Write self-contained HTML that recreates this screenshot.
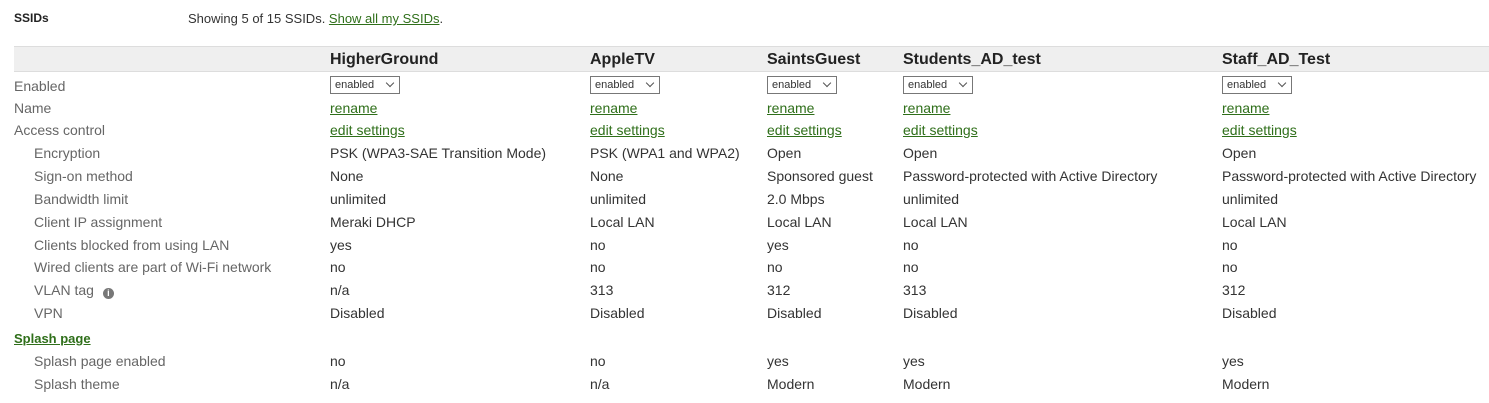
<!DOCTYPE html>
<html><head><meta charset="utf-8"><style>
body{margin:0;width:1489px;height:403px;background:#fff;font-family:"Liberation Sans",sans-serif;font-size:14px;color:#333;position:relative;overflow:hidden}
.r{position:absolute;left:0;width:1489px;height:18px;line-height:18px}
.r span{position:absolute;white-space:nowrap}
.l{left:14px;color:#666}
.i{left:34px;color:#666}
.c1{left:330px}.c2{left:590px}.c3{left:767px}.c4{left:903px}.c5{left:1222px}
a{color:#2f6f1a;text-decoration:underline}
.sel{display:inline-block;width:68px;height:16px;border:1px solid #777;font-size:11px;line-height:16px;box-sizing:content-box;position:relative;top:0}
.sel b{font-weight:normal;position:absolute;left:4px;color:#333}
.sel i{position:absolute;right:6px;top:3px;width:5px;height:5px;border-right:1px solid #555;border-bottom:1px solid #555;transform:rotate(45deg)}
.hd{position:absolute;left:14px;top:46px;width:1475px;height:26px;background:#efefef;border-top:1px solid #ddd;border-bottom:1px solid #ddd;box-sizing:border-box}
.hd span{position:absolute;top:4px;font-weight:bold;font-size:16px;color:#222}
</style></head><body>
<div style="position:absolute;left:14px;top:11px;font-weight:bold;font-size:12px;color:#222">SSIDs</div>
<div style="position:absolute;left:188px;top:11px;font-size:13px;color:#333">Showing 5 of 15 SSIDs. <a>Show all my SSIDs</a>.</div>
<div class="hd"><span style="left:316px">HigherGround</span><span style="left:576px">AppleTV</span><span style="left:753px">SaintsGuest</span><span style="left:889px">Students_AD_test</span><span style="left:1208px">Staff_AD_Test</span></div>
<div class="r" style="top:77px"><span class="l" style="top:0">Enabled</span>
<span class="c1" style="top:-1px"><span class="sel"><b>enabled</b><i></i></span></span>
<span class="c2" style="top:-1px"><span class="sel"><b>enabled</b><i></i></span></span>
<span class="c3" style="top:-1px"><span class="sel"><b>enabled</b><i></i></span></span>
<span class="c4" style="top:-1px"><span class="sel"><b>enabled</b><i></i></span></span>
<span class="c5" style="top:-1px"><span class="sel"><b>enabled</b><i></i></span></span></div>
<div class="r" style="top:99px"><span class="l">Name</span><span class="c1"><a>rename</a></span><span class="c2"><a>rename</a></span><span class="c3"><a>rename</a></span><span class="c4"><a>rename</a></span><span class="c5"><a>rename</a></span></div>
<div class="r" style="top:121px"><span class="l">Access control</span><span class="c1"><a>edit settings</a></span><span class="c2"><a>edit settings</a></span><span class="c3"><a>edit settings</a></span><span class="c4"><a>edit settings</a></span><span class="c5"><a>edit settings</a></span></div>
<div class="r" style="top:144px"><span class="i">Encryption</span><span class="c1">PSK (WPA3-SAE Transition Mode)</span><span class="c2">PSK (WPA1 and WPA2)</span><span class="c3">Open</span><span class="c4">Open</span><span class="c5">Open</span></div>
<div class="r" style="top:167px"><span class="i">Sign-on method</span><span class="c1">None</span><span class="c2">None</span><span class="c3">Sponsored guest</span><span class="c4">Password-protected with Active Directory</span><span class="c5">Password-protected with Active Directory</span></div>
<div class="r" style="top:190px"><span class="i">Bandwidth limit</span><span class="c1">unlimited</span><span class="c2">unlimited</span><span class="c3">2.0 Mbps</span><span class="c4">unlimited</span><span class="c5">unlimited</span></div>
<div class="r" style="top:213px"><span class="i">Client IP assignment</span><span class="c1">Meraki DHCP</span><span class="c2">Local LAN</span><span class="c3">Local LAN</span><span class="c4">Local LAN</span><span class="c5">Local LAN</span></div>
<div class="r" style="top:236px"><span class="i">Clients blocked from using LAN</span><span class="c1">yes</span><span class="c2">no</span><span class="c3">yes</span><span class="c4">no</span><span class="c5">no</span></div>
<div class="r" style="top:258px"><span class="i">Wired clients are part of Wi-Fi network</span><span class="c1">no</span><span class="c2">no</span><span class="c3">no</span><span class="c4">no</span><span class="c5">no</span></div>
<div class="r" style="top:281px"><span class="i">VLAN tag <span style="position:relative;display:inline-block;width:11px;height:11px;border-radius:50%;background:#777;color:#fff;font-size:9px;line-height:11px;text-align:center;font-weight:bold;margin-left:5px;top:1px">i</span></span><span class="c1">n/a</span><span class="c2">313</span><span class="c3">312</span><span class="c4">313</span><span class="c5">312</span></div>
<div class="r" style="top:304px"><span class="i">VPN</span><span class="c1">Disabled</span><span class="c2">Disabled</span><span class="c3">Disabled</span><span class="c4">Disabled</span><span class="c5">Disabled</span></div>
<div class="r" style="top:329px"><span class="l"><a style="font-weight:bold;color:#2f6f1a;font-size:13px">Splash page</a></span></div>
<div class="r" style="top:352px"><span class="i">Splash page enabled</span><span class="c1">no</span><span class="c2">no</span><span class="c3">yes</span><span class="c4">yes</span><span class="c5">yes</span></div>
<div class="r" style="top:375px"><span class="i">Splash theme</span><span class="c1">n/a</span><span class="c2">n/a</span><span class="c3">Modern</span><span class="c4">Modern</span><span class="c5">Modern</span></div>
</body></html>
